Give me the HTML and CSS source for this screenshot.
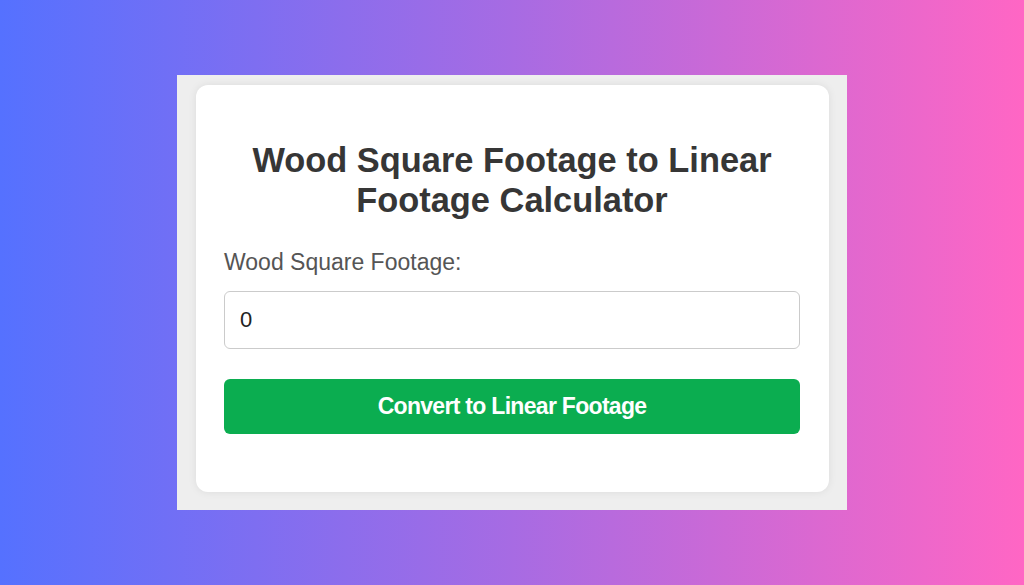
FILE: index.html
```html
<!DOCTYPE HTML>
<html>
<head>
<meta charset="utf-8">
<title>Wood Square Footage to Linear Footage Calculator</title>
<link rel="stylesheet" href="styles.css">
</head>

<body>
<div class="frame">
	<div class="card">
		<h1>Wood Square Footage to Linear Footage Calculator</h1>
		<label for="sqft">Wood Square Footage:</label>
		<input type="number" id="sqft" value="0">
		<button type="button" id="convert">Convert to Linear Footage</button>
	</div>
</div>
</body>
</html>
```

FILE: styles.css
```css
* {margin:0; padding:0; box-sizing:border-box;}

body {height:100vh; display:flex; align-items:center; justify-content:center; background:linear-gradient(to right, #5571ff, #a76be3 50%, #ff66c4); font-family:"Liberation Sans", Arial, sans-serif;}

.frame {width:670px; height:435px; background:#eeeeee; padding:10px 18px 18px 19px;}
.card {height:100%; background:#fff; border-radius:12px; box-shadow:0 0 8px rgba(0,0,0,0.08); padding:55px 29px 0 28px; display:flex; flex-direction:column;}

h1 {font-size:34.4px; line-height:40px; font-weight:bold; color:#363636; text-align:center; margin-bottom:29px;}
label {font-size:23px; line-height:26px; color:#555; margin-bottom:16px;}
input {height:58px; border:1px solid #cbcbcb; border-radius:6px; padding:0 15px; font-size:22px; font-family:inherit; color:#222; margin-bottom:30px; outline:none;}
button {height:55px; border:none; border-radius:6px; background:#0bad50; color:#fff; font-family:inherit; font-size:23px; font-weight:bold; letter-spacing:-0.7px; cursor:pointer;}
```
